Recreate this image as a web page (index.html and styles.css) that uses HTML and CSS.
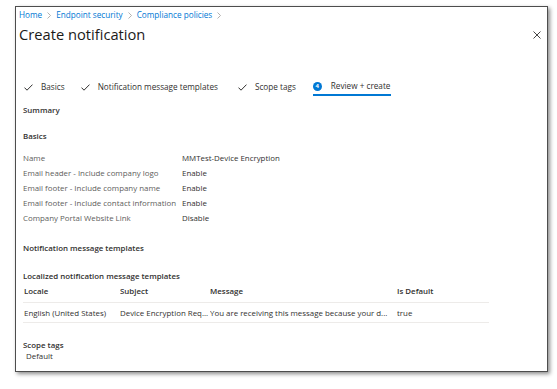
FILE: index.html
```html
<!DOCTYPE html>
<html>
<head>
<meta charset="utf-8">
<link rel="stylesheet" href="styles.css">
</head>
<body>
<div class="frame">
  <nav class="crumbs">
    <a class="crumb">Home</a>
    <svg class="chev" viewBox="0 0 4 7" width="4" height="7"><polyline points="0.5,0.5 3.5,3.5 0.5,6.5" fill="none" stroke="#a19f9d" stroke-width="0.8"/></svg>
    <a class="crumb">Endpoint security</a>
    <svg class="chev" viewBox="0 0 4 7" width="4" height="7"><polyline points="0.5,0.5 3.5,3.5 0.5,6.5" fill="none" stroke="#a19f9d" stroke-width="0.8"/></svg>
    <a class="crumb">Compliance policies</a>
    <svg class="chev" viewBox="0 0 4 7" width="4" height="7"><polyline points="0.5,0.5 3.5,3.5 0.5,6.5" fill="none" stroke="#a19f9d" stroke-width="0.8"/></svg>
  </nav>
  <header class="title-row">
    <h1 class="title">Create notification</h1>
    <span class="close"><svg viewBox="0 0 8 8" width="8" height="8"><path d="M0.5 0.5 L7.5 7.5 M7.5 0.5 L0.5 7.5" stroke="#323130" stroke-width="0.9" fill="none"/></svg></span>
  </header>
  <div class="steps">
    <div class="step done"><svg class="check" viewBox="0 0 9 7" width="9" height="7"><polyline points="0.5,3.6 3,6.2 8.5,0.6" fill="none" stroke="#323130" stroke-width="1"/></svg><span>Basics</span></div>
    <div class="step done"><svg class="check" viewBox="0 0 9 7" width="9" height="7"><polyline points="0.5,3.6 3,6.2 8.5,0.6" fill="none" stroke="#323130" stroke-width="1"/></svg><span>Notification message templates</span></div>
    <div class="step done"><svg class="check" viewBox="0 0 9 7" width="9" height="7"><polyline points="0.5,3.6 3,6.2 8.5,0.6" fill="none" stroke="#323130" stroke-width="1"/></svg><span>Scope tags</span></div>
    <div class="step current"><span class="num">4</span><span>Review + create</span></div>
  </div>
  <section class="content">
    <h2 class="heading summary">Summary</h2>
    <h2 class="heading basics">Basics</h2>
    <div class="props">
      <div class="prop"><span class="label">Name</span><span class="value">MMTest-Device Encryption</span></div>
      <div class="prop"><span class="label">Email header - Include company logo</span><span class="value">Enable</span></div>
      <div class="prop"><span class="label">Email footer - Include company name</span><span class="value">Enable</span></div>
      <div class="prop"><span class="label">Email footer - Include contact information</span><span class="value">Enable</span></div>
      <div class="prop"><span class="label">Company Portal Website Link</span><span class="value">Disable</span></div>
    </div>
    <h2 class="heading nmt">Notification message templates</h2>
    <h2 class="heading lnmt">Localized notification message templates</h2>
    <div class="table">
      <div class="trow thead">
        <span class="c1">Locale</span><span class="c2">Subject</span><span class="c3">Message</span><span class="c4">Is Default</span>
      </div>
      <div class="trow tbody">
        <span class="c1">English (United States)</span><span class="c2">Device Encryption Req...</span><span class="c3">You are receiving this message because your d...</span><span class="c4">true</span>
      </div>
    </div>
    <h2 class="heading scope">Scope tags</h2>
    <div class="scope-val">Default</div>
  </section>
</div>
</body>
</html>
```

FILE: styles.css
```css
* { box-sizing: border-box; }
html, body { margin: 0; padding: 0; background: #ffffff; }
body {
  font-family: "Open Sans", "Noto Sans", sans-serif;
  color: #323130;
  width: 557px;
  height: 389px;
  overflow: hidden;
}
.frame {
  margin: 6px 0 0 15px;
  width: 533px;
  height: 366px;
  border: 1.5px solid #4d4d4d;
  box-shadow: 2px 2px 4px rgba(0,0,0,0.45);
  background: #fff;
  position: relative;
}
.crumbs {
  display: flex;
  align-items: center;
  gap: 5px;
  padding: 2px 0 0 3px;
  height: 14px;
  font-size: 8.2px;
  line-height: 12px;
}
.crumb { color: #0078d4; text-decoration: none; }
.chev { display: block; margin-top: 1px; }
.title-row {
  display: flex;
  align-items: center;
  justify-content: space-between;
  padding: 0 6px 0 3px;
  margin-top: 2px;
  height: 22px;
}
.title {
  margin: 0;
  font-size: 14.7px;
  font-weight: 400;
  line-height: 22px;
  color: #1b1a19;
}
.close { display: block; width: 8px; height: 8px; margin-top: 1px; }
.close svg { display: block; }
.steps {
  display: flex;
  align-items: flex-start;
  margin: 35px 0 0 8px;
  font-size: 8.2px;
  line-height: 12px;
}
.step {
  display: flex;
  align-items: center;
  height: 16px;
  padding-bottom: 2px;
}
.step .check { margin-right: 8px; }
.step:nth-child(1) { margin-left: 0; }
.step:nth-child(2) { margin-left: 16px; }
.step:nth-child(3) { margin-left: 20px; }
.step:nth-child(4) { margin-left: 17px; }
.step.current { border-bottom: 2px solid #0078d4; padding-right: 1px; }
.num {
  display: inline-flex;
  align-items: center;
  justify-content: center;
  width: 9px;
  height: 9px;
  border-radius: 50%;
  background: #0078d4;
  color: #fff;
  font-size: 6px;
  font-weight: 700;
  line-height: 9px;
  margin-right: 9px;
}
.content { padding: 0 0 0 7px; font-size: 7.9px; }
.heading {
  margin: 0;
  font-size: 7.9px;
  font-weight: 600;
  line-height: 12px;
  color: #323130;
}
.summary { margin-top: 8px; }
.basics { margin-top: 14px; }
.props { margin-top: 9px; }
.prop { display: flex; height: 15px; line-height: 15px; }
.label { width: 159px; color: #605e5c; }
.value { color: #323130; }
.nmt { margin-top: 16px; }
.lnmt { margin-top: 16px; }
.table { width: 466px; margin-top: 3px; }
.trow { display: flex; border-bottom: 1px solid #edebe9; }
.trow span { line-height: 12px; white-space: nowrap; overflow: hidden; padding-right: 3px; }
.thead { padding: 0 0 5px 1px; font-weight: 600; }
.tbody { padding: 4px 0 3px 1px; color: #323130; }
.c1 { width: 96px; }
.c2 { width: 90px; }
.c3 { width: 187px; }
.c4 { width: 90px; }
.scope { margin-top: 17px; line-height: 11px; }
.scope-val { line-height: 11px; padding-left: 3px; color: #323130; }
```
